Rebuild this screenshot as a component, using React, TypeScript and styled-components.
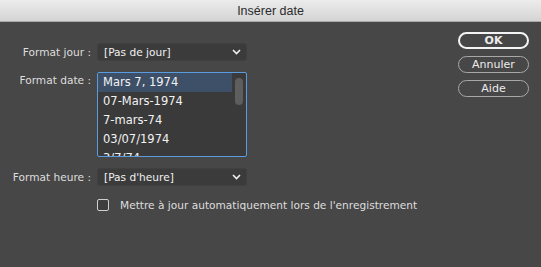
import styled, { createGlobalStyle } from "styled-components"

const Global = createGlobalStyle`
    html, body {
        margin: 0;
        padding: 0;
        background: #474747;
    }
    body {
        font-family: "DejaVu Sans", "Liberation Sans", sans-serif;
    }
`

const Window = styled.div`
    width: 541px;
    height: 267px;
    display: flex;
    flex-direction: column;
    background: #474747;
    overflow: hidden;
`

const TitleBar = styled.div`
    height: 22px;
    box-sizing: border-box;
    background: linear-gradient(#ececec, #d4d4d4);
    border-bottom: 1px solid #a9a9a9;
    display: flex;
    align-items: center;
    justify-content: center;
    font-family: "Liberation Sans", sans-serif;
    font-size: 12.5px;
    color: #2b2b2b;
`

const Body = styled.div`
    flex: 1;
    display: flex;
    justify-content: space-between;
`

const Form = styled.div`
    display: grid;
    grid-template-columns: 91px 150px;
    column-gap: 6px;
    row-gap: 11px;
    padding-top: 21px;
    align-content: start;
`

const Label = styled.div<{ $top?: boolean }>`
    font-size: 10.6px;
    color: #dedede;
    text-align: right;
    align-self: ${(p) => (p.$top ? "start" : "center")};
    padding-top: ${(p) => (p.$top ? "2px" : "0")};
    white-space: nowrap;
`

const Select = styled.div`
    height: 18px;
    box-sizing: border-box;
    border: 1px solid #404040;
    border-radius: 3px;
    background: #3b3b3b;
    display: flex;
    align-items: center;
    justify-content: space-between;
    padding: 0 5px 0 6px;
    font-size: 10.6px;
    color: #f0f0f0;
`

const List = styled.div`
    position: relative;
    height: 85px;
    box-sizing: border-box;
    border: 1px solid #5b9be0;
    border-radius: 2px;
    background: #3a3a3a;
    overflow: hidden;
`

const Row = styled.div<{ $selected?: boolean }>`
    height: 19px;
    line-height: 19px;
    padding-left: 5px;
    font-size: 11.5px;
    color: #f2f2f2;
    background: ${(p) => (p.$selected ? "#3e5068" : "transparent")};
    margin-right: ${(p) => (p.$selected ? "14px" : "0")};
`

const Thumb = styled.div`
    position: absolute;
    right: 3px;
    top: 5px;
    width: 8px;
    height: 27px;
    border-radius: 4px;
    background: #5e5e5e;
`

const CheckRow = styled.label`
    grid-column: 2;
    display: flex;
    align-items: center;
    gap: 11px;
    font-size: 10.6px;
    color: #dedede;
    white-space: nowrap;
    margin-top: 2px;
`

const Box = styled.span`
    display: block;
    flex-shrink: 0;
    width: 12px;
    height: 12px;
    box-sizing: border-box;
    border: 1px solid #cfcfcf;
    border-radius: 2px;
    background: #3e3e3e;
`

const Buttons = styled.div`
    display: flex;
    flex-direction: column;
    gap: 7px;
    padding: 10px 12px 0 0;
`

const Button = styled.div<{ $primary?: boolean }>`
    width: 71px;
    height: 17px;
    box-sizing: border-box;
    border-radius: 9px;
    border: ${(p) => (p.$primary ? "2px solid #f4f4f4" : "1px solid #a8a8a8")};
    display: flex;
    align-items: center;
    justify-content: center;
    font-size: 11px;
    font-weight: ${(p) => (p.$primary ? "bold" : "normal")};
    color: #ececec;
`

const Chevron = () => (
    <svg width="9" height="6" viewBox="0 0 9 6">
        <path d="M1 1 L4.5 4.5 L8 1" fill="none" stroke="#f0f0f0" strokeWidth="1.6" />
    </svg>
)

const formats = ["Mars 7, 1974", "07-Mars-1974", "7-mars-74", "03/07/1974", "3/7/74"]

const App = () => {
    return (
        <Window>
            <Global />
            <TitleBar>Insérer date</TitleBar>
            <Body>
                <Form>
                    <Label>Format jour :</Label>
                    <Select>
                        <span>[Pas de jour]</span>
                        <Chevron />
                    </Select>

                    <Label $top>Format date :</Label>
                    <List>
                        {formats.map((f, i) => (
                            <Row key={f} $selected={i === 0}>{f}</Row>
                        ))}
                        <Thumb />
                    </List>

                    <Label>Format heure :</Label>
                    <Select>
                        <span>[Pas d'heure]</span>
                        <Chevron />
                    </Select>

                    <CheckRow>
                        <Box />
                        Mettre à jour automatiquement lors de l'enregistrement
                    </CheckRow>
                </Form>

                <Buttons>
                    <Button $primary>OK</Button>
                    <Button>Annuler</Button>
                    <Button>Aide</Button>
                </Buttons>
            </Body>
        </Window>
    )
}

export default App
